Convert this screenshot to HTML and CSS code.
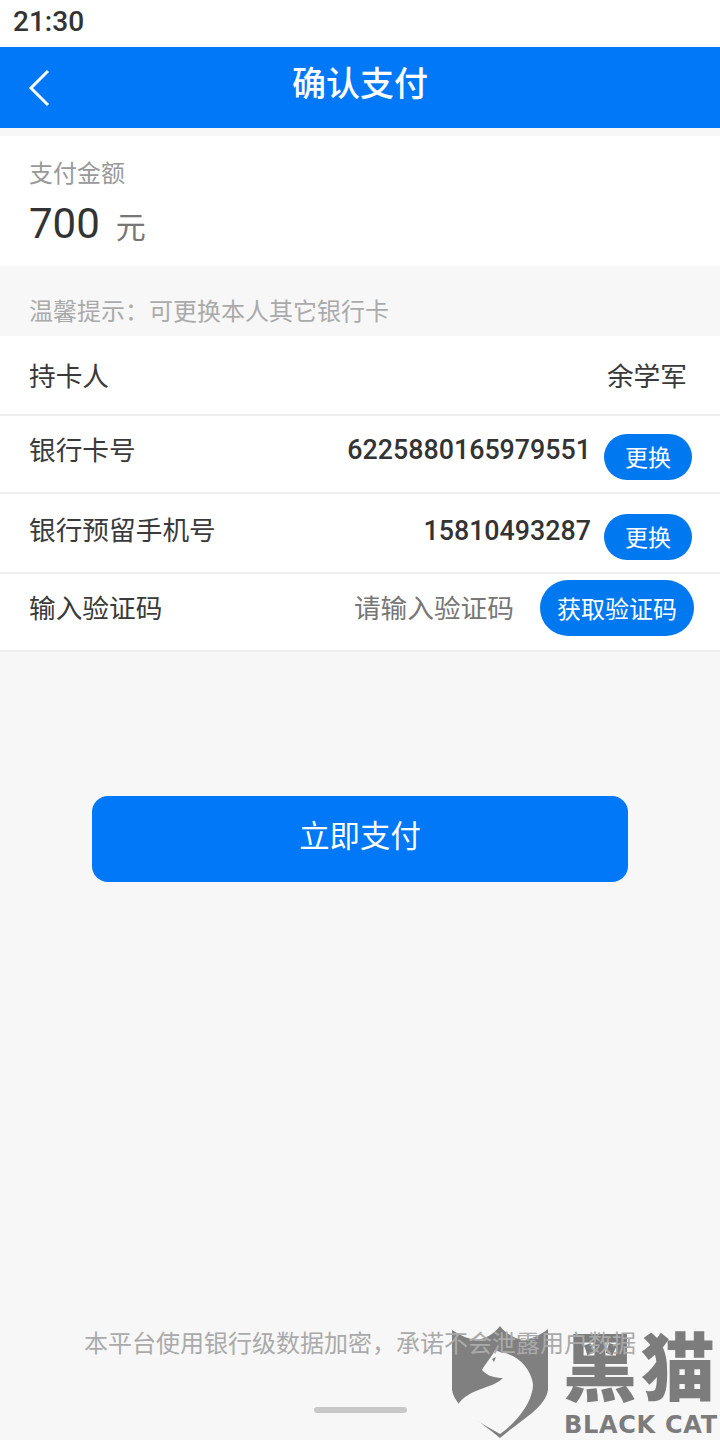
FILE: index.html
```html
<!DOCTYPE html>
<html lang="zh-CN">
<head>
<meta charset="utf-8">
<title>确认支付</title>
<link rel="stylesheet" href="styles.css">
</head>
<body>
<div class="page">
  <div class="status"><span class="time">21:30</span></div>
  <header class="nav">
    <svg class="back" width="24" height="38" viewBox="0 0 24 38"><path d="M21 2 L4 19 L21 36" fill="none" stroke="#fff" stroke-width="3"/></svg>
    <h1 class="title">确认支付</h1>
  </header>
  <section class="amount">
    <div class="amount-label">支付金额</div>
    <div class="amount-value"><span class="num">700</span><span class="unit">元</span></div>
  </section>
  <div class="tip">温馨提示：可更换本人其它银行卡</div>
  <section class="rows">
    <div class="row row-a"><span class="label">持卡人</span><span class="name">余学军</span></div>
    <div class="row row-b"><span class="label">银行卡号</span><div class="right"><span class="value">6225880165979551</span><span class="pill">更换</span></div></div>
    <div class="row row-c"><span class="label">银行预留手机号</span><div class="right"><span class="value">15810493287</span><span class="pill">更换</span></div></div>
    <div class="row row-d"><span class="label">输入验证码</span><div class="right"><span class="placeholder">请输入验证码</span><span class="code">获取验证码</span></div></div>
  </section>
  <div class="action"><button class="pay">立即支付</button></div>
  <footer class="foot">本平台使用银行级数据加密，承诺不会泄露用户数据</footer>
  <div class="home"></div>
  <div class="mark">
    <svg class="shield" width="98" height="113" viewBox="0 0 98 113">
      <path d="M1 4 C10 10 18 13 25 14 C34 13 43 8 49 0 C55 8 64 13 73 14 C80 13 90 9 97 3 L97 64 C94 82 70 94 49 112 C28 94 4 82 1 64 Z" fill="#808080"/>
      <path d="M44 24 L49 26 C66 28 80 42 82 58 C82 76 66 96 49 108 C36 100 18 92 6 80 C12 70 22 66 30 63 C38 60 46 58 52 52 C44 52 36 50 31 44 C34 38 40 32 44 24 Z" fill="#f7f7f7"/>
      <path d="M41 33 L45 31 L43 36 Z" fill="#808080"/>
    </svg>
    <div class="brand">
      <div class="brand-cn">黑猫</div>
      <div class="brand-en">BLACK CAT</div>
    </div>
  </div>
</div>
</body>
</html>
```
FILE: styles.css
```css
* { box-sizing: border-box; margin: 0; padding: 0; }
html, body { width: 720px; height: 1440px; overflow: hidden; }
body { background: #f7f7f7; font-family: "Noto Sans CJK SC", Roboto, sans-serif; }
.page { position: relative; width: 720px; height: 1440px; display: flex; flex-direction: column; background: #f7f7f7; }
.status { height: 47px; background: #fff; padding-left: 13px; display: flex; align-items: center; }
.time { font-family: Roboto, sans-serif; font-size: 28px; font-weight: 500; color: #333; margin-bottom: 4px; }
.nav { height: 81px; background: #0078f8; display: flex; align-items: center; justify-content: center; position: relative; flex: none; }
.back { position: absolute; left: 27px; top: 22px; }
.title { font-size: 34px; font-weight: 500; color: #fff; line-height: 1; margin-bottom: 11px; }
.amount { margin-top: 8px; height: 130px; background: #fff; padding: 19px 29px 0; flex: none; }
.amount-label { font-size: 24px; line-height: 34px; color: #999; }
.amount-value { display: flex; align-items: baseline; margin-top: 9px; }
.num { font-family: Roboto, sans-serif; font-size: 42px; line-height: 52px; color: #333; }
.unit { font-size: 30px; color: #777; margin-left: 16px; }
.tip { height: 70px; padding: 27px 29px 0; font-size: 24px; line-height: 34px; color: #aaa; flex: none; }
.rows { background: #fff; flex: none; }
.row { display: flex; justify-content: space-between; align-items: center; padding: 0 29px; border-bottom: 2px solid #eee; }
.row-a { height: 80px; }
.row-b { height: 78px; }
.row-c { height: 80px; }
.row-d { height: 78px; }
.label, .name { font-size: 26.7px; color: #3a3a3a; }
.name { padding-right: 4px; }
.row-a .label, .row-a .name { margin-bottom: 2px; }
.row-b .label { margin-bottom: 12px; }
.row-c .label { margin-bottom: 10px; }
.row-d .label { margin-bottom: 12px; }
.right { display: flex; align-items: center; margin-right: -1px; }
.row-d .right { margin-right: -3px; }
.value { font-family: Roboto, sans-serif; font-size: 26.8px; font-weight: 500; color: #333; }
.row-b .value { margin-bottom: 4px; margin-top: -4px; }
.row-c .value { margin-bottom: 4px; }
.pill { width: 88px; height: 46px; border-radius: 23px; background: #0078f0; color: #fff; font-size: 23px; display: flex; align-items: center; justify-content: center; margin-left: 13px; margin-top: 6px; padding-bottom: 2px; }
.row-c .pill { margin-top: 8px; }
.placeholder { font-size: 26.7px; color: #777; margin-bottom: 12px; }
.code { width: 154px; height: 56px; border-radius: 28px; background: #0078f0; color: #fff; font-size: 24px; display: flex; align-items: center; justify-content: center; margin-left: 26px; margin-bottom: 8px; padding-bottom: 2px; }
.action { padding: 144px 92px 0; flex: none; }
.pay { display: block; width: 536px; height: 86px; border: 0; border-radius: 16px; background: #0078f8; color: #fff; font-family: inherit; font-size: 30.4px; padding-bottom: 10px; }
.foot { position: absolute; left: 0; right: 0; top: 1324px; text-align: center; font-size: 24px; line-height: 36px; color: #aaa; z-index: 2; }
.home { position: absolute; left: 314px; top: 1407px; width: 93px; height: 6px; border-radius: 3px; background: #c8c8c8; }
.mark { position: absolute; left: 451px; top: 1326px; width: 269px; display: flex; }
.shield { flex: none; }
.brand { margin-left: 15px; display: flex; flex-direction: column; }
.brand-cn { font-size: 74px; font-weight: 900; line-height: 74px; letter-spacing: 4px; color: #7c7c7c; white-space: nowrap; margin-left: -1px; }
.brand-en { font-family: "DejaVu Sans", sans-serif; font-size: 24px; font-weight: 700; line-height: 26px; letter-spacing: 0.7px; color: #7c7c7c; white-space: nowrap; margin-top: 12px; }
```
